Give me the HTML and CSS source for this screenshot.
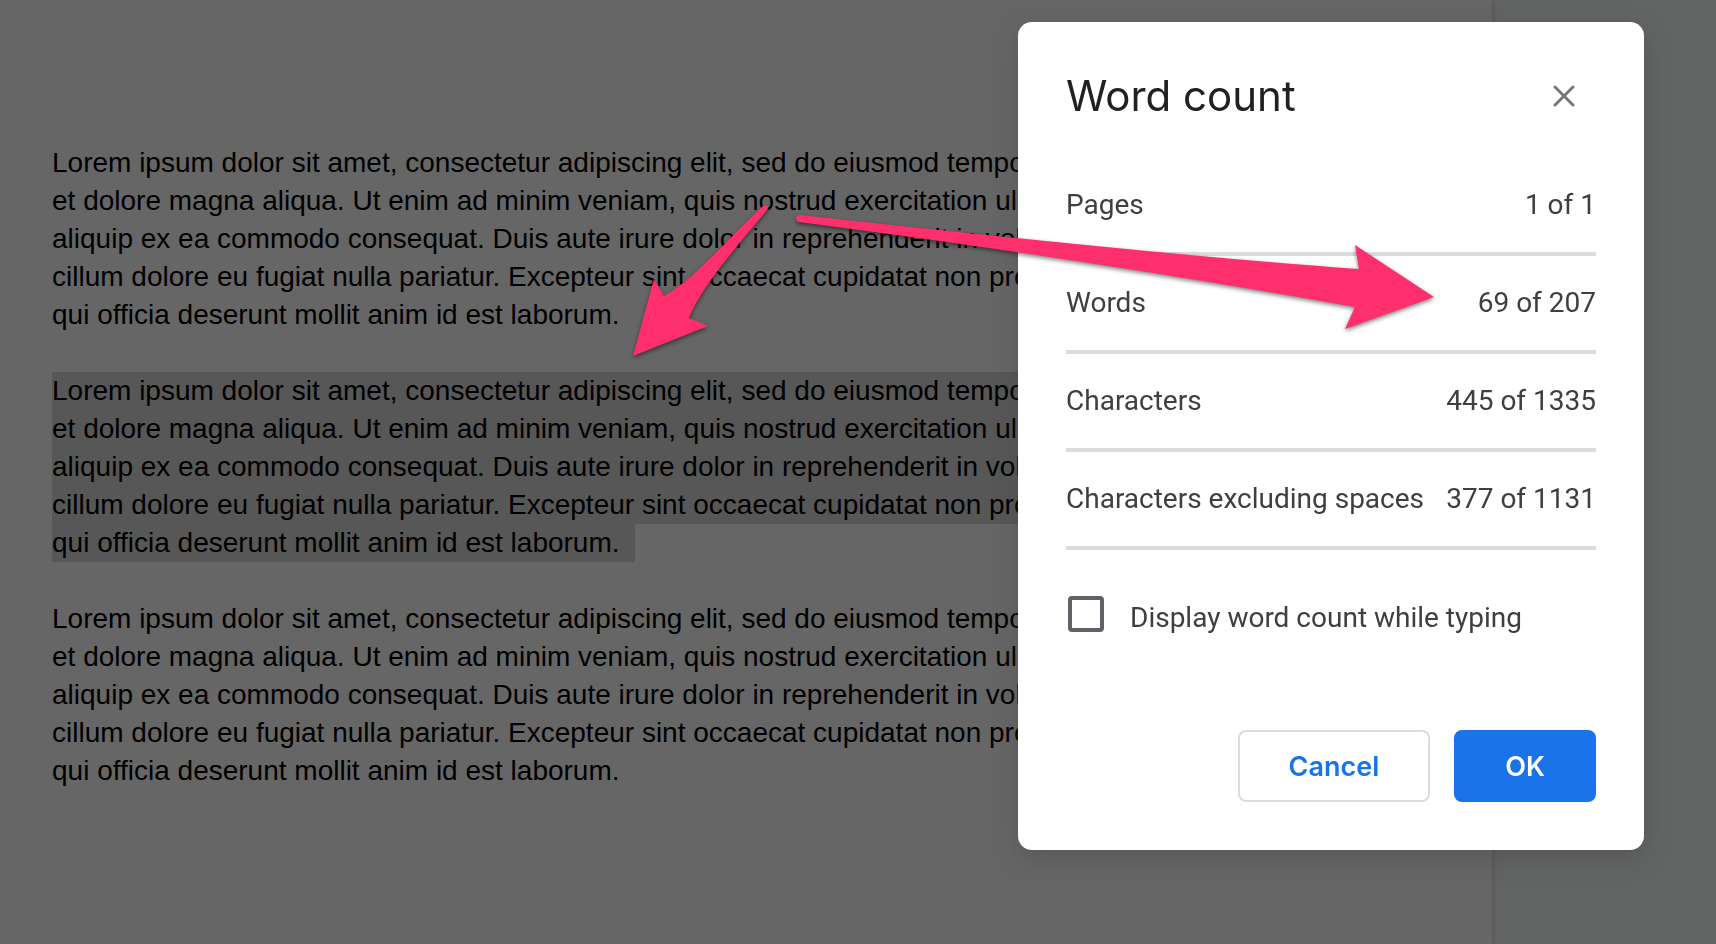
FILE: index.html
```html
<!DOCTYPE html>
<html lang="en">
<head>
  <meta charset="UTF-8">
  <title>Word count</title>
  <link rel="stylesheet" href="styles.css">
</head>
<body>

  <!-- Document -->
  <main class="page">
    <p>Lorem ipsum dolor sit amet, consectetur adipiscing elit, sed do eiusmod tempor incididunt ut labore et dolore magna aliqua. Ut enim ad minim veniam, quis nostrud exercitation ullamco laboris nisi ut aliquip ex ea commodo consequat. Duis aute irure dolor in reprehenderit in voluptate velit esse cillum dolore eu fugiat nulla pariatur. Excepteur sint occaecat cupidatat non proident, sunt in culpa qui officia deserunt mollit anim id est laborum.</p>
    <p><span class="selected">Lorem ipsum dolor sit amet, consectetur adipiscing elit, sed do eiusmod tempor incididunt ut labore et dolore magna aliqua. Ut enim ad minim veniam, quis nostrud exercitation ullamco laboris nisi ut aliquip ex ea commodo consequat. Duis aute irure dolor in reprehenderit in voluptate velit esse cillum dolore eu fugiat nulla pariatur. Excepteur sint occaecat cupidatat non proident, sunt in culpa qui officia deserunt mollit anim id est laborum.&nbsp;&nbsp;</span></p>
    <p>Lorem ipsum dolor sit amet, consectetur adipiscing elit, sed do eiusmod tempor incididunt ut labore et dolore magna aliqua. Ut enim ad minim veniam, quis nostrud exercitation ullamco laboris nisi ut aliquip ex ea commodo consequat. Duis aute irure dolor in reprehenderit in voluptate velit esse cillum dolore eu fugiat nulla pariatur. Excepteur sint occaecat cupidatat non proident, sunt in culpa qui officia deserunt mollit anim id est laborum.</p>
  </main>

  <div class="overlay"></div>

  <!-- Word count dialog -->
  <div class="dialog" role="dialog" aria-labelledby="dialogTitle">
    <div class="dialog-header">
      <h1 id="dialogTitle">Word count</h1>
      <button class="close" aria-label="Close">
        <svg width="24" height="24" viewBox="0 0 24 24">
          <path d="M3 3 L21 21 M21 3 L3 21" fill="none" stroke="#777" stroke-width="3" stroke-linecap="round"/>
        </svg>
      </button>
    </div>

    <table class="counts">
      <tr><th scope="row">Pages</th><td>1 of 1</td></tr>
      <tr><th scope="row">Words</th><td>69 of 207</td></tr>
      <tr><th scope="row">Characters</th><td>445 of 1335</td></tr>
      <tr><th scope="row">Characters excluding spaces</th><td>377 of 1131</td></tr>
    </table>

    <div class="option">
      <input type="checkbox" id="showCount">
      <label for="showCount">Display word count while typing</label>
    </div>

    <div class="actions">
      <button class="btn">Cancel</button>
      <button class="btn primary">OK</button>
    </div>
  </div>

  <!-- Arrows pointing at the selection and the word total -->
  <svg class="arrows" width="1716" height="944" viewBox="0 0 1716 944" aria-hidden="true">
    <path d="M633 356 L654 279 L664 296 C692 281 724 243 763 206 Q766 204 768 206 Q769 208 767 210 C739 244 701 287 689 318 L708 326 Z"/>
    <path d="M800 215 Q1172 256 1359 269 L1355 245 L1434 297 L1345 329 L1355 307 Q1099 261 799 222 C795 221 795 215 800 215 Z"/>
  </svg>

</body>
</html>
```

FILE: styles.css
```css
* {
  box-sizing: border-box;
}

body {
  margin: 0;
  min-height: 100vh;
  display: flex;
  background: #f8faf9;
  overflow: hidden;
}

.page {
  flex: 1;
  margin-right: 224px;
  padding: 144px 192px 0 52px;
  background: white;
  box-shadow: 0 0 6px rgba(60, 64, 67, 0.3);
  font-family: "Liberation Sans", Arial, sans-serif;
  font-size: 28px;
  line-height: 38px;
  color: black;
}

.page p {
  margin: 0 0 38px;
}

.selected {
  background: #d9d9d9;
  padding: 3px 0 4px;
}

.overlay {
  position: fixed;
  inset: 0;
  background: rgba(0, 0, 0, 0.6);
}

.dialog {
  position: absolute;
  top: 22px;
  right: 72px;
  width: 626px;
  padding: 48px;
  border-radius: 14px;
  background: white;
  box-shadow: 0 8px 24px rgba(60, 64, 67, 0.35);
  font-family: Roboto, Arial, sans-serif;
  font-size: 28px;
  line-height: 40px;
  color: #3c4043;
}

.dialog-header {
  display: flex;
  justify-content: space-between;
  align-items: center;
  height: 52px;
}

h1 {
  margin: 0;
  font-family: Inter, sans-serif;
  font-size: 42px;
  font-weight: 400;
  color: #202124;
}

.close {
  display: flex;
  padding: 20px;
  border: none;
  background: none;
  cursor: pointer;
}

.counts {
  width: 100%;
  margin-top: 36px;
  border-collapse: separate;
  border-spacing: 0;
}

.counts th,
.counts td {
  padding: 27px 0;
  border-bottom: 4px solid #dadce0;
  font-weight: 400;
  text-align: left;
}

.counts td {
  text-align: right;
}

.option {
  display: flex;
  align-items: flex-start;
  gap: 26px;
  margin: 46px 0 92px;
}

.option input {
  appearance: none;
  width: 36px;
  height: 36px;
  margin: 0 0 0 2px;
  border: 4px solid #5f6368;
  border-radius: 4px;
}

.option label {
  padding-top: 2px;
}

.actions {
  display: flex;
  justify-content: flex-end;
  gap: 24px;
}

.btn {
  height: 72px;
  padding: 0 49px;
  border: 2px solid #dadce0;
  border-radius: 8px;
  background: white;
  color: #1a73e8;
  font-family: Inter, sans-serif;
  font-size: 27px;
  font-weight: 600;
  cursor: pointer;
}

.btn.primary {
  border-color: #1a73e8;
  background: #1a73e8;
  color: white;
}

.arrows {
  position: absolute;
  top: 0;
  right: 0;
  fill: #ff2e6c;
  filter: drop-shadow(0 2px 2px rgba(0, 0, 0, 0.5));
  pointer-events: none;
}
```
